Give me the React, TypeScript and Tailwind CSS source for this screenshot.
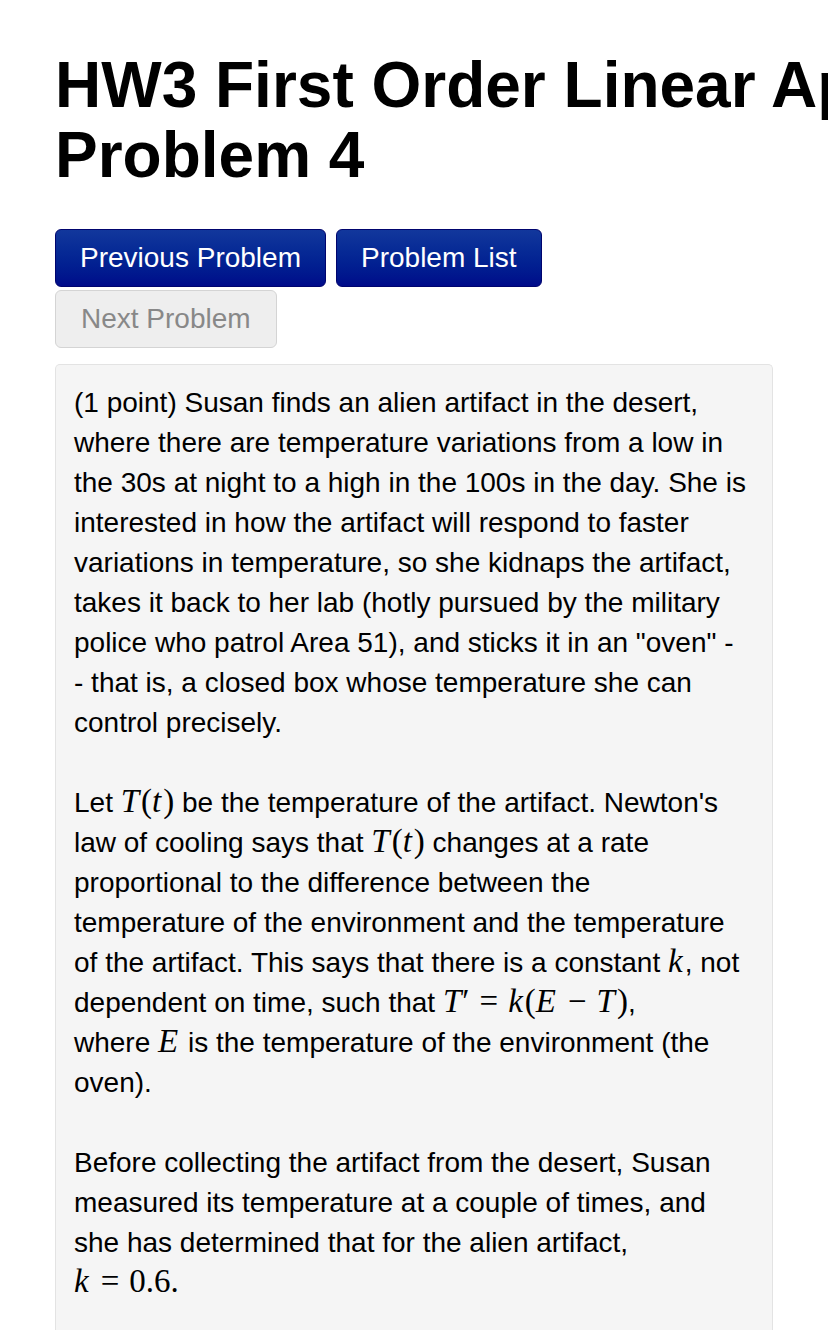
import React from 'react'

const serif = "font-['Liberation_Serif','DejaVu_Serif',serif] text-[33px] leading-none"

function V({ children }: { children: React.ReactNode }) {
  return <i className="mr-[2px] italic">{children}</i>
}

function M({ children }: { children: React.ReactNode }) {
  return <span className={serif}>{children}</span>
}

function Op({ children }: { children: React.ReactNode }) {
  return <span className="mx-[10px]">{children}</span>
}

function Tt() {
  return (
    <M>
      <V>T</V>(<V>t</V>)
    </M>
  )
}

export default function App() {
  return (
    <div className="min-h-[1330px] w-[828px] overflow-hidden bg-white font-['Liberation_Sans',Arial,sans-serif] text-black">
      <div className="pl-[55px] pt-[50px]">
        <h1 className="whitespace-nowrap text-[64px] font-bold leading-[70px]">
          HW3 First Order Linear Applications
          <br />
          Problem 4
        </h1>

        <div className="mt-[39px] flex flex-col gap-[3px]">
          <div className="flex gap-[10px]">
            <button className="h-[58px] rounded-[6px] border border-[#00046e] bg-gradient-to-b from-[#12379c] to-[#000a8a] px-[24px] text-[28px] text-white">
              Previous Problem
            </button>
            <button className="h-[58px] rounded-[6px] border border-[#00046e] bg-gradient-to-b from-[#12379c] to-[#000a8a] px-[24px] text-[28px] text-white">
              Problem List
            </button>
          </div>
          <div className="flex">
            <button className="h-[58px] rounded-[6px] border border-[#d4d4d4] bg-[#eeeeee] px-[25px] text-[28px] text-[#888888]">
              Next Problem
            </button>
          </div>
        </div>

        <div className="mt-[16px] min-h-[970px] w-[718px] rounded-t-[5px] border border-b-0 border-[#e3e3e3] bg-[#f5f5f5] px-[18px] pt-[18px] text-[28px] leading-[40px]">
          <p>
            (1 point) Susan finds an alien artifact in the desert,
            <br />
            where there are temperature variations from a low in
            <br />
            the 30s at night to a high in the 100s in the day. She is
            <br />
            interested in how the artifact will respond to faster
            <br />
            variations in temperature, so she kidnaps the artifact,
            <br />
            takes it back to her lab (hotly pursued by the military
            <br />
            police who patrol Area 51), and sticks it in an "oven" -
            <br />
            - that is, a closed box whose temperature she can
            <br />
            control precisely.
          </p>
          <p className="mt-[40px]">
            Let <Tt /> be the temperature of the artifact. Newton's
            <br />
            law of cooling says that <Tt /> changes at a rate
            <br />
            proportional to the difference between the
            <br />
            temperature of the environment and the temperature
            <br />
            of the artifact. This says that there is a constant{' '}
            <M>
              <V>k</V>
            </M>
            , not
            <br />
            dependent on time, such that{' '}
            <M>
              <V>T</V>
              <span className="-ml-[1px]">′</span>
              <Op>=</Op>
              <V>k</V>(<V>E</V>
              <Op>−</Op>
              <V>T</V>)
            </M>
            ,
            <br />
            where{' '}
            <M>
              <V>E</V>
            </M>{' '}
            is the temperature of the environment (the
            <br />
            oven).
          </p>
          <p className="mt-[40px]">
            Before collecting the artifact from the desert, Susan
            <br />
            measured its temperature at a couple of times, and
            <br />
            she has determined that for the alien artifact,
            <br />
            <M>
              <V>k</V>
              <Op>=</Op>0.6.
            </M>
          </p>
        </div>
      </div>
    </div>
  )
}
